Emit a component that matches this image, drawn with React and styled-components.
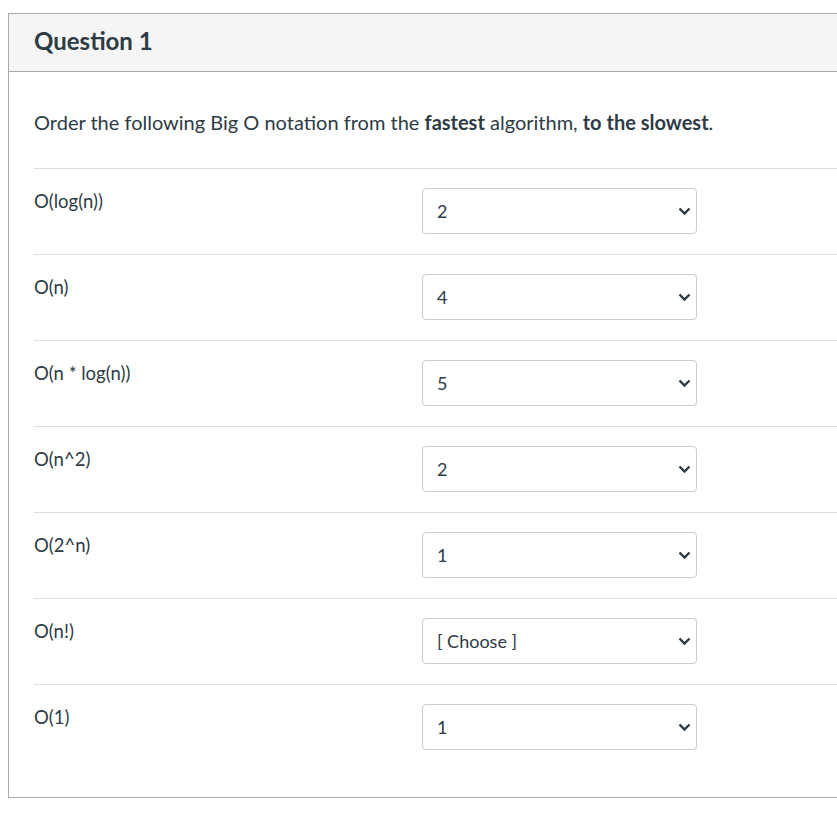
import React from 'react';
import styled, { createGlobalStyle } from 'styled-components';

const GlobalStyle = createGlobalStyle`
  html {
    overflow: hidden;
  }

  body {
    margin: 8px 0 8px 8px;
    background: #fff;
    font-family: Lato, "Open Sans", sans-serif;
    color: #2d3b45;
  }
`;

const Card = styled.div`
  margin: 5px -20px 0 0;
  border: 1px solid #aaaaaa;
  border-right: none;
`;

const Header = styled.div`
  height: 57px;
  background: #f5f5f5;
  border-bottom: 1px solid #aaaaaa;
  display: flex;
  align-items: center;
  padding-left: 25px;
`;

const Title = styled.h2`
  margin: 0 0 3px;
  font-size: 24px;
  font-weight: 700;
  line-height: 30px;
  color: #2d3b45;
`;

const Body = styled.div`
  padding: 37px 0 27px 25px;
`;

const Prompt = styled.p`
  margin: 0 0 33px;
  font-size: 20px;
  line-height: 26px;

  strong {
    font-weight: 700;
  }
`;

const Row = styled.div`
  display: flex;
  align-items: flex-start;
  padding: 19px 0 20px;
  border-top: 1px solid #dddddd;
`;

const Label = styled.div`
  width: 388px;
  padding-top: 2px;
  font-size: 18.5px;
  line-height: 22px;
`;

const SelectBox = styled.div`
  box-sizing: border-box;
  width: 275px;
  height: 46px;
  border: 1px solid #c7cdd1;
  border-radius: 4px;
  display: flex;
  align-items: center;
  justify-content: space-between;
  padding: 0 5px 0 14px;
  font-size: 18px;
  color: #2d3b45;
`;

const Chevron = () => (
  <svg width="13" height="10" viewBox="0 0 13 10">
    <path d="M1.5 2.5 L6.5 7.5 L11.5 2.5" fill="none" stroke="#2d3b45" strokeWidth="2.4" />
  </svg>
);

const rows = [
  ['O(log(n))', '2'],
  ['O(n)', '4'],
  ['O(n * log(n))', '5'],
  ['O(n^2)', '2'],
  ['O(2^n)', '1'],
  ['O(n!)', '[ Choose ]'],
  ['O(1)', '1'],
];

const App = () => (
  <>
    <GlobalStyle />
    <Card>
      <Header>
        <Title>Question 1</Title>
      </Header>
      <Body>
        <Prompt>
          Order the following Big O notation from the <strong>fastest</strong> algorithm,{' '}
          <strong>to the slowest</strong>.
        </Prompt>
        {rows.map(([label, value]) => (
          <Row key={label}>
            <Label>{label}</Label>
            <SelectBox>
              <span>{value}</span>
              <Chevron />
            </SelectBox>
          </Row>
        ))}
      </Body>
    </Card>
  </>
);

export default App;
